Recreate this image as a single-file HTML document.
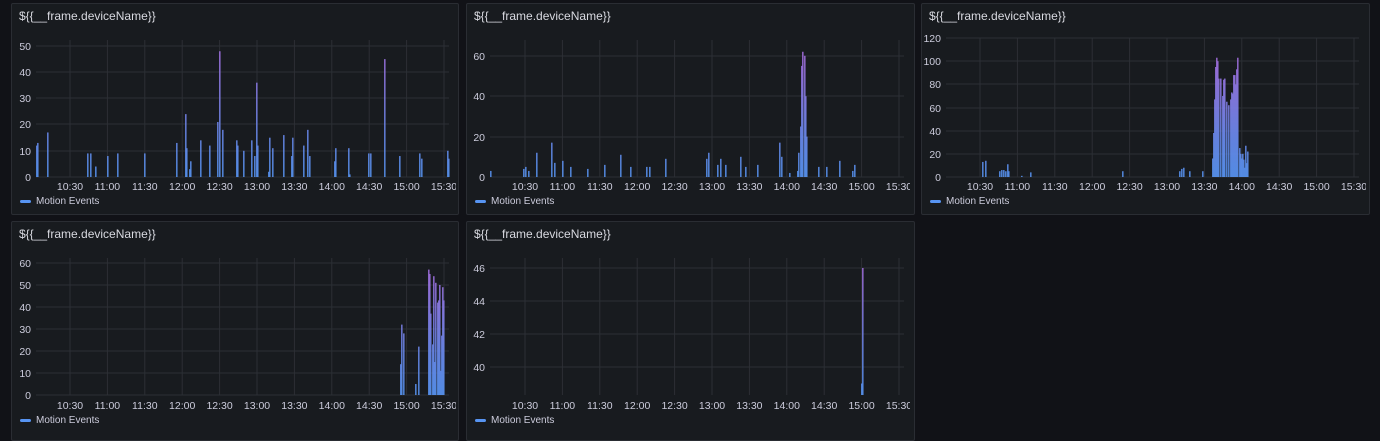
<!DOCTYPE html>
<html><head><meta charset="utf-8"><style>
html,body{margin:0;padding:0;background:#111217;width:1380px;height:432px;overflow:hidden;font-family:"Liberation Sans",sans-serif;}
.p{position:absolute;background:#181b1f;border:1px solid #2a2d33;border-radius:2px;box-sizing:border-box}
.t{position:absolute;left:7px;top:5px;color:#d8d9e0;font-size:12px}
svg{position:absolute;left:0;top:0}
</style></head><body>
<div class="p" style="left:11px;top:3px;width:448px;height:212px"><div class="t">${{__frame.deviceName}}</div></div>
<div class="p" style="left:466px;top:3px;width:449px;height:212px"><div class="t">${{__frame.deviceName}}</div></div>
<div class="p" style="left:921px;top:3px;width:449px;height:212px"><div class="t">${{__frame.deviceName}}</div></div>
<div class="p" style="left:11px;top:221px;width:448px;height:220px"><div class="t">${{__frame.deviceName}}</div></div>
<div class="p" style="left:466px;top:221px;width:449px;height:220px"><div class="t">${{__frame.deviceName}}</div></div>
<svg id="s" width="1380" height="432" xmlns="http://www.w3.org/2000/svg" font-family="Liberation Sans, sans-serif" font-size="10.5"></svg>
<script>
const s=document.getElementById('s');let h='<defs></defs>';let n=0;
const times=['10:30','11:00','11:30','12:00','12:30','13:00','13:30','14:00','14:30','15:00','15:30'];
function panel(o){
 n++;
 h+=`<linearGradient id="g${n}" gradientUnits="userSpaceOnUse" x1="0" y1="${o.base}" x2="0" y2="${o.gtop}"><stop offset="0" stop-color="#5794f2"/><stop offset="0.35" stop-color="#6a88ec"/><stop offset="1" stop-color="#a46ee0"/></linearGradient>`;
 h+=`<clipPath id="c${n}"><rect x="0" y="0" width="${o.clip}" height="432"/></clipPath>`;
 for(const [l,y] of o.ticks){h+=`<line x1="${o.left}" x2="${o.right}" y1="${y}" y2="${y}" stroke="#2c2f35"/>`;h+=`<text x="${o.left-5}" y="${y+4}" fill="#ccccdc" text-anchor="end">${l}</text>`;}
 times.forEach((t,i)=>{const x=o.x0+i*37.4;h+=`<line x1="${x}" x2="${x}" y1="${o.top}" y2="${o.base}" stroke="#2c2f35"/>`;h+=`<text x="${x}" y="${o.labY}" fill="#ccccdc" text-anchor="middle" clip-path="url(#c${n})">${t}</text>`;});
 for(const [x,v] of o.bars){const y=o.y(v);h+=`<rect x="${x}" y="${y}" width="1.6" height="${o.base-y}" fill="url(#g${n})" opacity="0.85"/>`;}
 h+=`<rect x="${o.pl+9}" y="${o.legY-2}" width="11" height="3" rx="1.5" fill="#5794f2"/><text x="${o.pl+25}" y="${o.legY+2}" fill="#ccccdc" font-size="10">Motion Events</text>`;
}
const b1=[[36,12],[37,13],[47,17],[87,9],[90,9],[95,4],[107,8],[117,9],[144,9],[176,13],[185,24],[186,11],[189,3],[190,6],[200,14],[209,12],[217,21],[219,48],[222,18],[236,14],[237,12],[243,10],[251,14],[254,8],[256,36],[257,12],[268,2],[269,15],[272,11],[283,16],[291,8],[292,15],[303,12],[307,18],[309,8],[334,6],[335,11],[348,11],[349,1],[368,9],[370,9],[384,45],[399,8],[419,9],[421,7],[447,10],[448,7]];
panel({left:36,right:449,x0:70,top:40,base:177,gtop:46,pl:11,ticks:[[0,177],[10,151],[20,124],[30,98],[40,72],[50,46]],bars:b1,y:v=>177-v*2.62,legY:202,labY:190,clip:456});
const b2=[[490,3],[523,4],[525,5],[528,3],[536,12],[551,17],[554,7],[562,8],[570,5],[587,4],[604,6],[620,11],[630,5],[646,5],[649,5],[665,9],[706,9],[708,12],[717,6],[720,9],[725,6],[740,10],[745,5],[757,6],[779,17],[781,10],[789,2],[797,3],[798,12],[800,25],[801,55],[802,62],[804,60],[805,40],[806,20],[818,5],[826,5],[839,8],[852,3],[854,6]];
panel({left:490,right:904,x0:525,top:40,base:177,gtop:56,pl:466,ticks:[[0,177],[20,137],[40,96],[60,56]],bars:b2,y:v=>177-v*2.02,legY:202,labY:190,clip:910});
const b3=[[982,13],[985,14],[999,5],[1001,6],[1003,6],[1005,5],[1007,11],[1008,5],[1021,1],[1030,4],[1122,5],[1179,5],[1181,7],[1183,8],[1189,5],[1202,5],[1212,16],[1213,38],[1214,67],[1215,95],[1216,103],[1217,100],[1218,85],[1220,85],[1222,70],[1223,84],[1224,85],[1226,65],[1228,62],[1230,67],[1231,73],[1232,72],[1233,88],[1234,88],[1235,80],[1236,93],[1237,103],[1239,25],[1240,20],[1241,16],[1242,20],[1243,15],[1244,8],[1245,27],[1246,12],[1247,22]];
panel({left:946,right:1359,x0:980,top:38,base:177,gtop:58,pl:921,ticks:[[0,177],[20,154],[40,131],[60,108],[80,84],[100,61],[120,38]],bars:b3,y:v=>177-v*1.158,legY:202,labY:190,clip:1366});
const b4=[[400,14],[401,32],[403,28],[415,5],[418,22],[428,57],[429,55],[430,37],[432,23],[433,54],[434,15],[435,51],[437,42],[438,43],[439,50],[440,11],[441,27],[442,49],[443,43]];
panel({left:36,right:449,x0:70,top:258,base:395,gtop:268,pl:11,ticks:[[0,395],[10,373],[20,351],[30,329],[40,307],[50,285],[60,263]],bars:b4,y:v=>395-v*2.2,legY:421,labY:409,clip:456});
panel({left:490,right:904,x0:525,top:258,base:395,gtop:268,pl:466,ticks:[[40,367],[42,334],[44,301],[46,268]],bars:[[861,39],[862,46]],y:v=>367-(v-40)*16.5,legY:421,labY:409,clip:910});
s.innerHTML=h;
</script>
</body></html>
